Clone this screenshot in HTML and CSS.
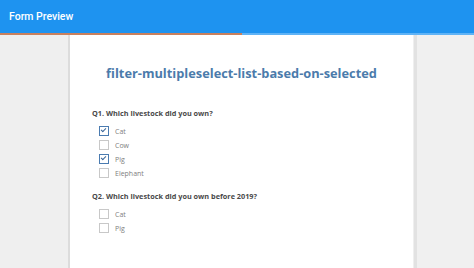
FILE: index.html
```html
<!DOCTYPE html>
<html>
<head>
    <title>Form Preview</title>
    <link rel="stylesheet" href="styles.css">
</head>
<body>
    <div class="topbar">
        <span class="topbar-title">Form Preview</span>
        <div class="progress"></div>
    </div>
    <div class="page">
        <div class="card">
            <h1 class="form-title">filter-multipleselect-list-based-on-selected</h1>

            <div class="question">
                <div class="question-label">Q1. Which livestock did you own?</div>
                <label class="option"><span class="box checked"></span>Cat</label>
                <label class="option"><span class="box"></span>Cow</label>
                <label class="option"><span class="box checked"></span>Pig</label>
                <label class="option"><span class="box"></span>Elephant</label>
            </div>

            <div class="question">
                <div class="question-label">Q2. Which livestock did you own before 2019?</div>
                <label class="option"><span class="box"></span>Cat</label>
                <label class="option"><span class="box"></span>Pig</label>
            </div>
        </div>
        <div class="side"></div>
    </div>
</body>
</html>
```

FILE: styles.css
```css
body {
    margin: 0;
    font-family: "Open Sans", Arial, sans-serif;
    background: #efefef;
    height: 268px;
    overflow: hidden;
}
.topbar {
    position: relative;
    height: 33px;
    background: #1e93f0;
    display: flex;
    align-items: center;
    padding-left: 9px;
    border-bottom: 2px solid #5fb3f6;
}
.topbar-title {
    font-family: Roboto, Arial, sans-serif;
    font-weight: 500;
    font-size: 10.5px;
    color: #fff;
}
.progress {
    position: absolute;
    left: 0;
    bottom: -2px;
    width: 242px;
    height: 2px;
    background: #c8805e;
}
.page {
    display: flex;
    height: 233px;
    padding-left: 68px;
}
.card {
    width: 345px;
    background: #fff;
    border-left: 2px solid #dcdcdc;
    padding: 29px 0 0 22px;
    box-sizing: border-box;
}
.side {
    width: 56px;
    margin-left: 1px;
    border-left: 3px solid #e2e2e2;
    background: #f0f0f0;
}
.form-title {
    margin: 0 0 26px -22px;
    text-align: center;
    font-size: 12.8px;
    font-weight: 700;
    color: #4b7bab;
}
.question {
    margin-bottom: 11px;
}
.question-label {
    font-size: 7.3px;
    font-weight: 700;
    color: #4a4a4a;
    margin-bottom: 6px;
}
.option {
    display: flex;
    align-items: center;
    height: 14px;
    padding-left: 7px;
    font-size: 7px;
    color: #808080;
}
.box {
    width: 8px;
    height: 8px;
    border: 1px solid #c8c8c8;
    margin-right: 6px;
    position: relative;
}
.box.checked {
    border-color: #4a7bb0;
}
.box.checked::after {
    content: "";
    position: absolute;
    left: 2px;
    top: 0px;
    width: 2px;
    height: 4px;
    border: solid #3a679a;
    border-width: 0 1.5px 1.5px 0;
    transform: rotate(45deg);
}
```
